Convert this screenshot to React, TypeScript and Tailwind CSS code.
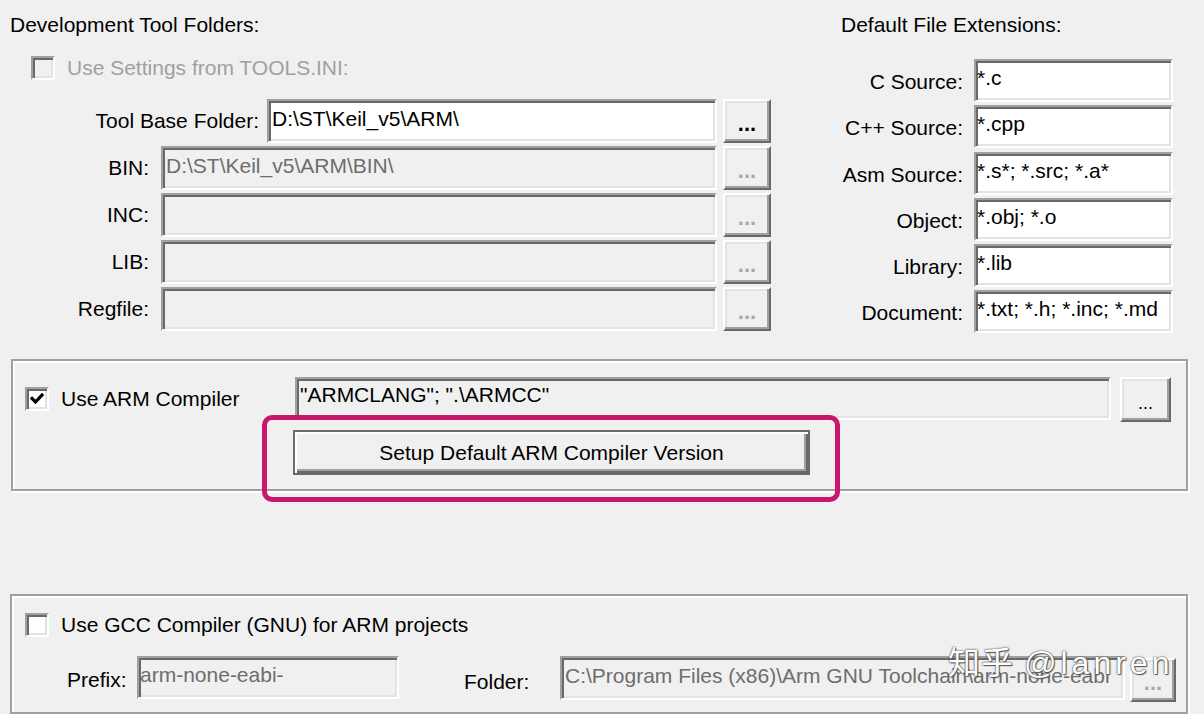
import React from "react";

const sunken =
  "border-2 border-t-[#a0a0a0] border-l-[#a0a0a0] border-b-white border-r-white shadow-[inset_2px_2px_0_#696969,inset_-2px_-2px_0_#e3e3e3]";
const raised =
  "border-2 border-t-white border-l-white border-b-[#696969] border-r-[#696969] shadow-[inset_-2px_-2px_0_#a0a0a0,inset_2px_2px_0_#e3e3e3] bg-[#f0f0f0]";
const groupBox =
  "border-2 border-[#a0a0a0] shadow-[inset_2px_2px_0_#ffffff,2px_2px_0_#ffffff]";

function Checkbox({ checked, disabled }: { checked?: boolean; disabled?: boolean }) {
  return (
    <div
      className={`relative w-[24px] h-[24px] shrink-0 ${sunken} ${disabled ? "bg-[#f0f0f0]" : "bg-white"}`}
    >
      {checked && (
        <svg className="absolute left-[3px] top-[3px]" width="14" height="14" viewBox="0 0 14 14">
          <polyline
            points="2,6.5 5.5,10 12,3"
            fill="none"
            stroke="#000"
            strokeWidth="3.2"
            strokeLinecap="square"
          />
        </svg>
      )}
    </div>
  );
}

function Dots({ bold, gray, small }: { bold?: boolean; gray?: boolean; small?: boolean }) {
  return (
    <span
      className={`leading-none ${bold ? "font-bold" : ""} ${small ? "text-[18px]" : "text-[22px]"} ${gray ? "text-[#a8a8a8] font-bold" : "text-black"}`}
    >
      ...
    </span>
  );
}

function Browse({
  w = 48,
  h = 44,
  bold,
  gray,
  small,
}: {
  w?: number;
  h?: number;
  bold?: boolean;
  gray?: boolean;
  small?: boolean;
}) {
  return (
    <div
      className={`${raised} flex items-center justify-center shrink-0 pt-[6px]`}
      style={{ width: w, height: h }}
    >
      <Dots bold={bold} gray={gray} small={small} />
    </div>
  );
}

function LeftRow({
  label,
  labelW,
  gap,
  inputW,
  value,
  white,
  gray,
  bold,
  grayDots,
  mt,
}: {
  label: string;
  labelW: string;
  gap: string;
  inputW: string;
  value?: string;
  white?: boolean;
  gray?: boolean;
  bold?: boolean;
  grayDots?: boolean;
  mt: string;
}) {
  return (
    <div className={`flex items-start ${mt}`}>
      <div className={`${labelW} text-right leading-[24px] pt-[10px] shrink-0`}>{label}</div>
      <div
        className={`${gap} ${inputW} h-[44px] shrink-0 ${sunken} ${white ? "bg-white" : "bg-[#f0f0f0]"} pl-[3px] pt-[6px] leading-[24px] whitespace-nowrap overflow-hidden ${gray ? "text-[#6d6d6d]" : "text-black"}`}
      >
        {value}
      </div>
      <div className="ml-[6px]">
        <Browse bold={bold} gray={grayDots} />
      </div>
    </div>
  );
}

function ExtRow({ label, value, first }: { label: string; value: string; first?: boolean }) {
  return (
    <div className={`flex items-start ${first ? "" : "mt-[3.3px]"}`}>
      <div className="w-[133px] text-right leading-[24px] pt-[11px] shrink-0">{label}</div>
      <div
        className={`ml-[11px] w-[199px] h-[43px] shrink-0 ${sunken} bg-white pl-[1px] pt-[5px] leading-[24px] whitespace-nowrap overflow-hidden`}
      >
        {value}
      </div>
    </div>
  );
}

export default function App() {
  return (
    <div className="relative w-[1204px] h-[714px] overflow-hidden bg-[#f0f0f0] text-[21px] text-black font-['Liberation_Sans',Arial,sans-serif]">
      {/* Top section */}
      <div className="flex">
        {/* Left column */}
        <div className="w-[830px] shrink-0">
          <div className="pl-[10px] pt-[13px] leading-[24px]">Development Tool Folders:</div>
          <div className="flex items-start pl-[31px] mt-[19px]">
            <Checkbox disabled />
            <div className="ml-[12px] leading-[24px] text-[#a0a0a0]">Use Settings from TOOLS.INI:</div>
          </div>
          <LeftRow
            mt="mt-[19px]"
            label="Tool Base Folder:"
            labelW="w-[259px]"
            gap="ml-[8px]"
            inputW="w-[450px]"
            value="D:\ST\Keil_v5\ARM\"
            white
            bold
          />
          <LeftRow
            mt="mt-[3px]"
            label="BIN:"
            labelW="w-[149px]"
            gap="ml-[12px]"
            inputW="w-[556px]"
            value="D:\ST\Keil_v5\ARM\BIN\"
            gray
            grayDots
          />
          <LeftRow mt="mt-[3px]" label="INC:" labelW="w-[149px]" gap="ml-[12px]" inputW="w-[556px]" grayDots />
          <LeftRow mt="mt-[3px]" label="LIB:" labelW="w-[149px]" gap="ml-[12px]" inputW="w-[556px]" grayDots />
          <LeftRow mt="mt-[3px]" label="Regfile:" labelW="w-[149px]" gap="ml-[12px]" inputW="w-[556px]" grayDots />
        </div>

        {/* Right column */}
        <div className="flex-1">
          <div className="pl-[11px] pt-[13px] leading-[24px]">Default File Extensions:</div>
          <div className="mt-[22px]">
            <ExtRow first label="C Source:" value="*.c" />
            <ExtRow label="C++ Source:" value="*.cpp" />
            <ExtRow label="Asm Source:" value="*.s*; *.src; *.a*" />
            <ExtRow label="Object:" value="*.obj; *.o" />
            <ExtRow label="Library:" value="*.lib" />
            <ExtRow label="Document:" value="*.txt; *.h; *.inc; *.md" />
          </div>
        </div>
      </div>

      {/* ARM compiler group */}
      <div className={`ml-[11px] mt-[26px] w-[1177px] h-[132px] ${groupBox}`}>
        <div className="flex items-start mt-[16px] pl-[12px]">
          <div className="w-[270px] flex items-start shrink-0 pt-[10px]">
            <Checkbox checked />
            <div className="ml-[12px] leading-[24px]">Use ARM Compiler</div>
          </div>
          <div
            className={`w-[816px] h-[43px] shrink-0 ${sunken} bg-[#f0f0f0] pl-[3px] pt-[4px] leading-[24px] whitespace-nowrap overflow-hidden`}
          >
            "ARMCLANG"; ".\ARMCC"
          </div>
          <div className="ml-[9px]">
            <Browse w={51} h={45} small />
          </div>
        </div>
        <div className="ml-[280px] mt-[8px] w-[517px] h-[45px] border-2 border-[#6a6a6a] bg-[#f0f0f0] shadow-[inset_2px_2px_0_#ffffff,inset_-2px_-2px_0_#696969,inset_-4px_-4px_0_#a0a0a0] flex items-center justify-center leading-[24px] pt-[1px]">
          Setup Default ARM Compiler Version
        </div>
      </div>

      {/* GCC group */}
      <div className={`ml-[10px] mt-[103px] w-[1178px] h-[120px] ${groupBox}`}>
        <div className="flex items-start mt-[17px] pl-[13px]">
          <Checkbox />
          <div className="ml-[12px] leading-[24px]">Use GCC Compiler (GNU) for ARM projects</div>
        </div>
        <div className="flex items-start mt-[19px] pl-[55px]">
          <div className="w-[70px] leading-[24px] pt-[12px] shrink-0">Prefix:</div>
          <div
            className={`w-[262px] h-[43px] shrink-0 ${sunken} bg-[#f0f0f0] pl-[1px] pt-[5px] leading-[24px] whitespace-nowrap overflow-hidden text-[#6d6d6d]`}
          >
            arm-none-eabi-
          </div>
          <div className="ml-[65px] w-[96px] leading-[24px] pt-[14px] shrink-0">Folder:</div>
          <div
            className={`w-[565px] h-[44px] shrink-0 ${sunken} bg-[#f0f0f0] pl-[3px] pt-[6px] leading-[24px] whitespace-nowrap overflow-hidden text-[#6d6d6d]`}
          >
            C:\Program Files (x86)\Arm GNU Toolchain\arm-none-eabi
          </div>
          <div className="ml-[5px] mt-[2px]">
            <Browse w={46} h={44} gray />
          </div>
        </div>
      </div>

      {/* Highlight annotation */}
      <div className="absolute left-[262px] top-[415px] w-[578px] h-[87px] border-[5px] border-[#c9176c] rounded-[10px] pointer-events-none" />

      {/* Watermark */}
      <div className="absolute left-[948px] top-[636px] flex items-baseline text-white [text-shadow:0_0_1px_#444,0_0_2px_#555,1px_1px_1px_#555] pointer-events-none">
        <span className="text-[32px] font-['Noto_Sans_CJK_SC',sans-serif] tracking-[1px]">知乎</span>
        <span className="ml-[10px] text-[32px] tracking-[4px] font-['Liberation_Sans',Arial,sans-serif]">@lanren</span>
      </div>
    </div>
  );
}
